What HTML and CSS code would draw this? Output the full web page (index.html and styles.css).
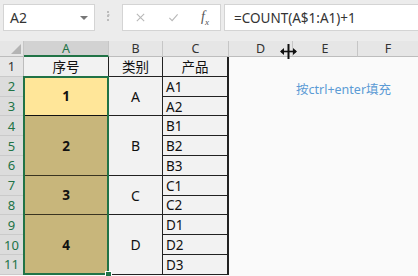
FILE: index.html
```html
<!DOCTYPE html>
<html>
<head>
    <title>COUNT 填充序号</title>
    <link rel="stylesheet" href="styles.css">
</head>
<body>
    <div class="toolbar">
        <div class="namebox">
            <span>A2</span>
            <span class="caret"></span>
        </div>
        <div class="grip"></div>
        <div class="fxbtns">
            <svg class="btn-icon" viewBox="0 0 12 12"><path d="M2 2 L10 10 M10 2 L2 10" stroke="#b8b8b8" stroke-width="1.2" fill="none"/></svg>
            <svg class="btn-icon" viewBox="0 0 12 12"><path d="M1.5 6.5 L4.5 9.5 L10.5 2.5" stroke="#b8b8b8" stroke-width="1.2" fill="none"/></svg>
            <span class="fx">f<sub>x</sub></span>
        </div>
        <div class="formula">=COUNT(A$1:A1)+1</div>
    </div>

    <div class="sheet">
        <div class="corner"><span class="tri"></span></div>
        <div class="colhead sel">A</div>
        <div class="colhead">B</div>
        <div class="colhead">C</div>
        <div class="colhead">D</div>
        <div class="colhead">E</div>
        <div class="colhead last">F</div>

        <div class="rowhead r1">1</div>
        <div class="rowhead sel r2">2</div>
        <div class="rowhead sel r3">3</div>
        <div class="rowhead sel r4">4</div>
        <div class="rowhead sel r5">5</div>
        <div class="rowhead sel r6">6</div>
        <div class="rowhead sel r7">7</div>
        <div class="rowhead sel r8">8</div>
        <div class="rowhead sel r9">9</div>
        <div class="rowhead sel r10">10</div>
        <div class="rowhead sel r11">11</div>

        <div class="cell title ca r1">序号</div>
        <div class="cell title cb r1">类别</div>
        <div class="cell title cc r1">产品</div>

        <div class="cell num first ca g1">1</div>
        <div class="cell num ca g2">2</div>
        <div class="cell num ca g3">3</div>
        <div class="cell num ca g4">4</div>

        <div class="cell cat cb g1">A</div>
        <div class="cell cat cb g2">B</div>
        <div class="cell cat cb g3">C</div>
        <div class="cell cat cb g4">D</div>

        <div class="cell item cc r2">A1</div>
        <div class="cell item cc r3">A2</div>
        <div class="cell item cc r4">B1</div>
        <div class="cell item cc r5">B2</div>
        <div class="cell item cc r6">B3</div>
        <div class="cell item cc r7">C1</div>
        <div class="cell item cc r8">C2</div>
        <div class="cell item cc r9">D1</div>
        <div class="cell item cc r10">D2</div>
        <div class="cell item cc r11">D3</div>

        <div class="blank"></div>

        <div class="selection"><span class="handle"></span></div>

        <div class="note">按ctrl+enter填充</div>

        <svg class="resize-cursor" viewBox="0 0 17 15">
            <path d="M8.5 0 V15" stroke="#111" stroke-width="2"/>
            <path d="M1 7.5 H16" stroke="#111" stroke-width="1.6"/>
            <path d="M0 7.5 L4 4 V11 Z M17 7.5 L13 4 V11 Z" fill="#111"/>
        </svg>
    </div>
</body>
</html>
```

FILE: styles.css
```css
body {
    margin: 0;
    width: 418px;
    height: 276px;
    overflow: hidden;
    background: #fafafa;
    font-family: "Noto Sans", "Noto Sans CJK SC", sans-serif;
    color: #222;
}

/* formula bar */
.toolbar {
    height: 41px;
    box-sizing: border-box;
    padding: 4px 0 10px 3px;
    background: #ececec;
    display: flex;
    align-items: stretch;
}

.namebox {
    width: 92px;
    box-sizing: border-box;
    background: #fff;
    border: 1px solid #d4d4d4;
    display: flex;
    align-items: center;
    justify-content: space-between;
    padding: 0 6px 0 6px;
    font-size: 14px;
    color: #333;
}

.caret {
    width: 0;
    height: 0;
    border-left: 4px solid transparent;
    border-right: 4px solid transparent;
    border-top: 4px solid #777;
}

.grip {
    width: 27px;
    background: radial-gradient(circle, #bdbdbd 1px, transparent 1.2px) center / 3px 4px repeat-y;
    background-size: 3px 4px;
    background-position: 12px 9px;
    background-repeat: no-repeat;
    position: relative;
}

.grip::before {
    content: '';
    position: absolute;
    left: 12px;
    top: 7px;
    width: 2px;
    height: 12px;
    background: repeating-linear-gradient(to bottom, #bcbcbc 0 2px, transparent 2px 4px);
}

.fxbtns {
    width: 99px;
    box-sizing: border-box;
    background: #fff;
    border: 1px solid #d4d4d4;
    display: flex;
    align-items: center;
    padding-left: 12px;
    gap: 22px;
}

.btn-icon {
    width: 11px;
    height: 11px;
}

.fx {
    font-family: "Liberation Serif", serif;
    font-style: italic;
    font-size: 14px;
    color: #555;
}

.fx sub {
    font-size: 9px;
}

.formula {
    flex: 1;
    margin-left: 3px;
    background: #fff;
    border: 1px solid #d4d4d4;
    border-right: none;
    display: flex;
    align-items: center;
    padding-left: 9px;
    font-size: 13.5px;
    color: #333;
}

/* worksheet grid */
.sheet {
    position: relative;
    display: grid;
    grid-template-columns: 24px 85px 54px 66px 64px 65px 1fr;
    grid-template-rows: 16px repeat(11, 19.8px);
}

.corner {
    background: #e6e6e6;
    border-right: 1px solid #c6c6c6;
    border-bottom: 1px solid #bdbdbd;
    box-sizing: border-box;
    position: relative;
}

.tri {
    position: absolute;
    right: 2px;
    bottom: 2px;
    width: 0;
    height: 0;
    border-left: 10px solid transparent;
    border-bottom: 10px solid #b4b4b4;
}

.colhead {
    background: #e6e6e6;
    border-right: 1px solid #c6c6c6;
    border-bottom: 1px solid #bdbdbd;
    box-sizing: border-box;
    display: flex;
    align-items: center;
    justify-content: center;
    font-size: 12.5px;
    color: #333;
}

.colhead.sel {
    background: #d2d2d2;
    color: #217346;
    border-bottom: 2px solid #217346;
}

.colhead.last {
    border-right: none;
}

.rowhead {
    grid-column: 1;
    background: #e6e6e6;
    border-right: 1px solid #bdbdbd;
    border-bottom: 1px solid #cacaca;
    box-sizing: border-box;
    display: flex;
    align-items: center;
    justify-content: center;
    font-size: 13px;
    color: #333;
}

.rowhead.sel {
    background: #dcdcdc;
    color: #217346;
}

.r1 { grid-row: 2; }
.r2 { grid-row: 3; }
.r3 { grid-row: 4; }
.r4 { grid-row: 5; }
.r5 { grid-row: 6; }
.r6 { grid-row: 7; }
.r7 { grid-row: 8; }
.r8 { grid-row: 9; }
.r9 { grid-row: 10; }
.r10 { grid-row: 11; }
.r11 { grid-row: 12; }

.g1 { grid-row: 3 / span 2; }
.g2 { grid-row: 5 / span 3; }
.g3 { grid-row: 8 / span 2; }
.g4 { grid-row: 10 / span 3; }

.ca { grid-column: 2; }
.cb { grid-column: 3; }
.cc { grid-column: 4; }

.cell {
    background: #f2f2f2;
    border-right: 1px solid #222;
    border-bottom: 1px solid #222;
    box-sizing: border-box;
    display: flex;
    align-items: center;
    font-size: 13.5px;
    color: #111;
}

.cell.cc {
    border-right: 2px solid #222;
}

.title {
    justify-content: center;
    font-size: 13.5px;
}

.num {
    justify-content: center;
    font-weight: bold;
    background: #c8b67b;
    border-bottom-color: #3a3420;
}

.num.first {
    background: #ffe699;
    border-bottom-color: #111;
}

.cat {
    justify-content: center;
    font-size: 14px;
}

.item {
    padding-left: 3px;
    padding-top: 1px;
}

.blank {
    grid-column: 5 / span 3;
    grid-row: 2 / span 11;
}

.selection {
    grid-column: 2;
    grid-row: 3 / span 10;
    margin-left: -1px;
    margin-top: -1px;
    border: 2px solid #217346;
    border-top-width: 2px;
    pointer-events: none;
    position: relative;
}

.handle {
    position: absolute;
    right: -5px;
    bottom: -5px;
    width: 5px;
    height: 5px;
    background: #217346;
    border: 1px solid #fff;
}

.note {
    position: absolute;
    left: 296px;
    top: 38px;
    font-size: 12.5px;
    color: #5b9bd5;
    white-space: nowrap;
}

.resize-cursor {
    position: absolute;
    left: 280px;
    top: 3px;
    width: 17px;
    height: 15px;
}
```
